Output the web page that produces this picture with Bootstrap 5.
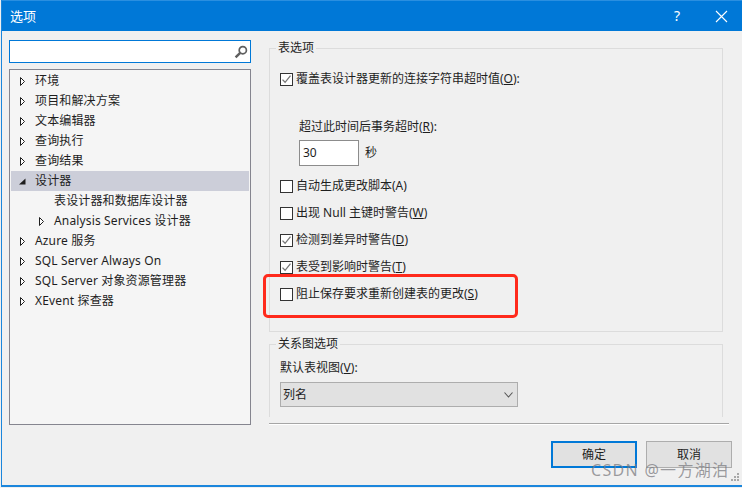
<!DOCTYPE html>
<html lang="zh">
<head>
<meta charset="utf-8">
<title>选项</title>
<link rel="stylesheet" href="https://cdn.jsdelivr.net/npm/bootstrap@5.3.0/dist/css/bootstrap.min.css">
<style>
html,body{width:742px;height:488px;overflow:hidden;background:#f0f0f0}
body{font:12px/16px "Noto Sans","Noto Sans CJK SC",sans-serif;color:#1e1e1e;position:relative}
.dlg{width:741px;height:487px;margin-left:1px;border:solid #1b86dc;border-width:0 0 2px 1px;background:#f0f0f0;position:relative}
.tbar{height:31px;background:#0078d7;color:#fff;padding:0 14px 0 8px;font-size:13px;border-top:1px solid #2a8fe0}
.tbar svg{display:block}
.qmark{font-size:14px;margin-right:35px}
.body-row{padding:9px 0 0 7px;gap:18px;height:394px}
.leftcol{width:242px;gap:6px}
.srch{height:23px;border:1px solid #0078d7;background:#fff;padding-right:2px}
.tree{height:356px;border:1px solid #85858f;background:#f5f5f5;padding:1px;list-style:none;margin:0}
.tree li{height:20px;padding-left:8px;gap:9px;white-space:nowrap;letter-spacing:.15px}
.tree li.sel{background:#ccced9}
.tree li.lv1{padding-left:27px}
.tree li.lv1b{padding-left:43px}
.ind{width:7px;height:11px;flex:none}
.rightcol{width:454px}
fieldset.grp{border:1px solid #dcdcdc;padding:0 10px;margin:0;min-width:0}
fieldset.grp legend{float:none;width:auto;font-size:12px;line-height:16px;margin:0 0 0 -4px;padding:0 2px}
.g1{height:292px}
.g2{height:81px;border-bottom:0!important;margin-top:4px!important}
.ck{display:flex;align-items:center;gap:3px;height:16px;white-space:nowrap}
.ck input.form-check-input{width:13px;height:13px;margin:0;border:1px solid #333;border-radius:0;background-color:#fff;flex:none;box-shadow:none}
.ck input.form-check-input:checked{background-color:#fff;border-color:#333;background-size:11px 11px;background-image:url("data:image/svg+xml,%3csvg xmlns='http://www.w3.org/2000/svg' viewBox='0 0 11 11'%3e%3cpath fill='none' stroke='%23777' stroke-width='1.3' d='M1.5 5.6l2.6 2.7 5.4-6.6'/%3e%3c/svg%3e")}
.c1{margin-top:15px}.c2{margin-top:12px}.c3{margin-top:11px}
.lbl{margin:32px 0 5px 19px}
.numrow{margin-left:19px;gap:6px;height:26px}
.num{width:60px;height:26px;border:1px solid #8c8c8c;background:#fff;padding:0 3px;font-size:12px;line-height:24px}
.sel2lbl{margin:8px 0 6px 0}
.combo{width:238px;height:25px;border:1px solid #adadad;background:#e1e1e1;padding:0 4px 0 2px}
.sep{width:460px;height:2px;background:#a6a6a6;border-bottom:1px solid #fff;margin-top:6px}
.foot{gap:9px;padding:16px 10px 0 0;width:100%}
.dbtn{width:86px;height:27px;background:#e1e1e1;border:1px solid #adadad;border-radius:0;font-size:12px;line-height:16px;color:#1e1e1e;padding:0}
.dbtn.pri{border:2px solid #0078d7}
.redbox{position:absolute;left:263px;top:274px;width:255px;height:44px;border:3px solid #ff2a1c;border-radius:5px}
.wm{position:absolute;left:591px;top:460px;font-size:16px;line-height:20px;color:rgba(120,120,125,.72);letter-spacing:1.3px;white-space:nowrap}
.grip{position:absolute;right:2px;bottom:3px}
u{text-underline-offset:1px}
</style>
</head>
<body>
<div class="dlg">
  <div class="tbar d-flex align-items-center justify-content-between">
    <span>选项</span>
    <div class="d-flex align-items-center">
      <span class="qmark">?</span>
      <svg width="13" height="13" viewBox="0 0 13 13"><path d="M1 1l11 11M12 1L1 12" stroke="#fff" stroke-width="1.1" fill="none"/></svg>
    </div>
  </div>
  <div class="body-row d-flex">
    <div class="leftcol d-flex flex-column">
      <div class="srch d-flex align-items-center justify-content-end">
        <svg width="14" height="14" viewBox="0 0 14 14"><circle cx="8.800" cy="5.200" r="3.600" fill="none" stroke="#5f5f5f" stroke-width="1.700"/><path d="M6.200 7.800L1.600 12.400" stroke="#5f5f5f" stroke-width="2.400"/></svg>
      </div>
      <ul class="tree">
        <li class="d-flex align-items-center"><svg class="ind" viewBox="0 0 7 11"><path d="M1.500 1.500l4 4-4 4z" fill="#fff" stroke="#1e1e1e"/></svg>环境</li>
        <li class="d-flex align-items-center"><svg class="ind" viewBox="0 0 7 11"><path d="M1.500 1.500l4 4-4 4z" fill="#fff" stroke="#1e1e1e"/></svg>项目和解决方案</li>
        <li class="d-flex align-items-center"><svg class="ind" viewBox="0 0 7 11"><path d="M1.500 1.500l4 4-4 4z" fill="#fff" stroke="#1e1e1e"/></svg>文本编辑器</li>
        <li class="d-flex align-items-center"><svg class="ind" viewBox="0 0 7 11"><path d="M1.500 1.500l4 4-4 4z" fill="#fff" stroke="#1e1e1e"/></svg>查询执行</li>
        <li class="d-flex align-items-center"><svg class="ind" viewBox="0 0 7 11"><path d="M1.500 1.500l4 4-4 4z" fill="#fff" stroke="#1e1e1e"/></svg>查询结果</li>
        <li class="sel d-flex align-items-center"><svg class="ind" viewBox="0 0 7 11"><path d="M0 8.500L6.500 2.500v6z" fill="#1e1e1e"/></svg>设计器</li>
        <li class="lv1b d-flex align-items-center">表设计器和数据库设计器</li>
        <li class="lv1 d-flex align-items-center"><svg class="ind" viewBox="0 0 7 11"><path d="M1.500 1.500l4 4-4 4z" fill="#fff" stroke="#1e1e1e"/></svg>Analysis Services 设计器</li>
        <li class="d-flex align-items-center"><svg class="ind" viewBox="0 0 7 11"><path d="M1.500 1.500l4 4-4 4z" fill="#fff" stroke="#1e1e1e"/></svg>Azure 服务</li>
        <li class="d-flex align-items-center"><svg class="ind" viewBox="0 0 7 11"><path d="M1.500 1.500l4 4-4 4z" fill="#fff" stroke="#1e1e1e"/></svg>SQL Server Always On</li>
        <li class="d-flex align-items-center"><svg class="ind" viewBox="0 0 7 11"><path d="M1.500 1.500l4 4-4 4z" fill="#fff" stroke="#1e1e1e"/></svg>SQL Server 对象资源管理器</li>
        <li class="d-flex align-items-center"><svg class="ind" viewBox="0 0 7 11"><path d="M1.500 1.500l4 4-4 4z" fill="#fff" stroke="#1e1e1e"/></svg>XEvent 探查器</li>
      </ul>
    </div>
    <div class="rightcol d-flex flex-column">
      <fieldset class="grp g1">
        <legend>表选项</legend>
        <label class="ck c1"><input class="form-check-input" type="checkbox" checked><span>覆盖表设计器更新的连接字符串超时值(<u>O</u>):</span></label>
        <div class="lbl">超过此时间后事务超时(<u>R</u>):</div>
        <div class="numrow d-flex align-items-center"><div class="num">30</div><span>秒</span></div>
        <label class="ck c2"><input class="form-check-input" type="checkbox"><span>自动生成更改脚本(A)</span></label>
        <label class="ck c3"><input class="form-check-input" type="checkbox"><span>出现 Null 主键时警告(<u>W</u>)</span></label>
        <label class="ck c3"><input class="form-check-input" type="checkbox" checked><span>检测到差异时警告(<u>D</u>)</span></label>
        <label class="ck c3"><input class="form-check-input" type="checkbox" checked><span>表受到影响时警告(<u>T</u>)</span></label>
        <label class="ck c3"><input class="form-check-input" type="checkbox"><span>阻止保存要求重新创建表的更改(<u>S</u>)</span></label>
      </fieldset>
      <fieldset class="grp g2">
        <legend>关系图选项</legend>
        <div class="sel2lbl">默认表视图(<u>V</u>):</div>
        <div class="combo d-flex align-items-center justify-content-between">
          <span>列名</span>
          <svg width="9" height="6" viewBox="0 0 9 6"><path d="M.5.5L4.500 5 8.500.5" fill="none" stroke="#555" stroke-width="1.100"/></svg>
        </div>
      </fieldset>
      <div class="sep"></div>
    </div>
  </div>
  <div class="foot d-flex justify-content-end">
    <button type="button" class="btn dbtn pri">确定</button>
    <button type="button" class="btn dbtn">取消</button>
  </div>
  <svg class="grip" width="10" height="10" viewBox="0 0 10 10" fill="#a8a8a8"><rect x="7" y="1" width="2" height="2"/><rect x="4" y="4" width="2" height="2"/><rect x="7" y="4" width="2" height="2"/><rect x="1" y="7" width="2" height="2"/><rect x="4" y="7" width="2" height="2"/><rect x="7" y="7" width="2" height="2"/></svg>
</div>
<div class="redbox"></div>
<div class="wm">CSDN @一方湖泊</div>
<script src="https://cdn.jsdelivr.net/npm/bootstrap@5.3.0/dist/js/bootstrap.bundle.min.js"></script>
</body>
</html>
